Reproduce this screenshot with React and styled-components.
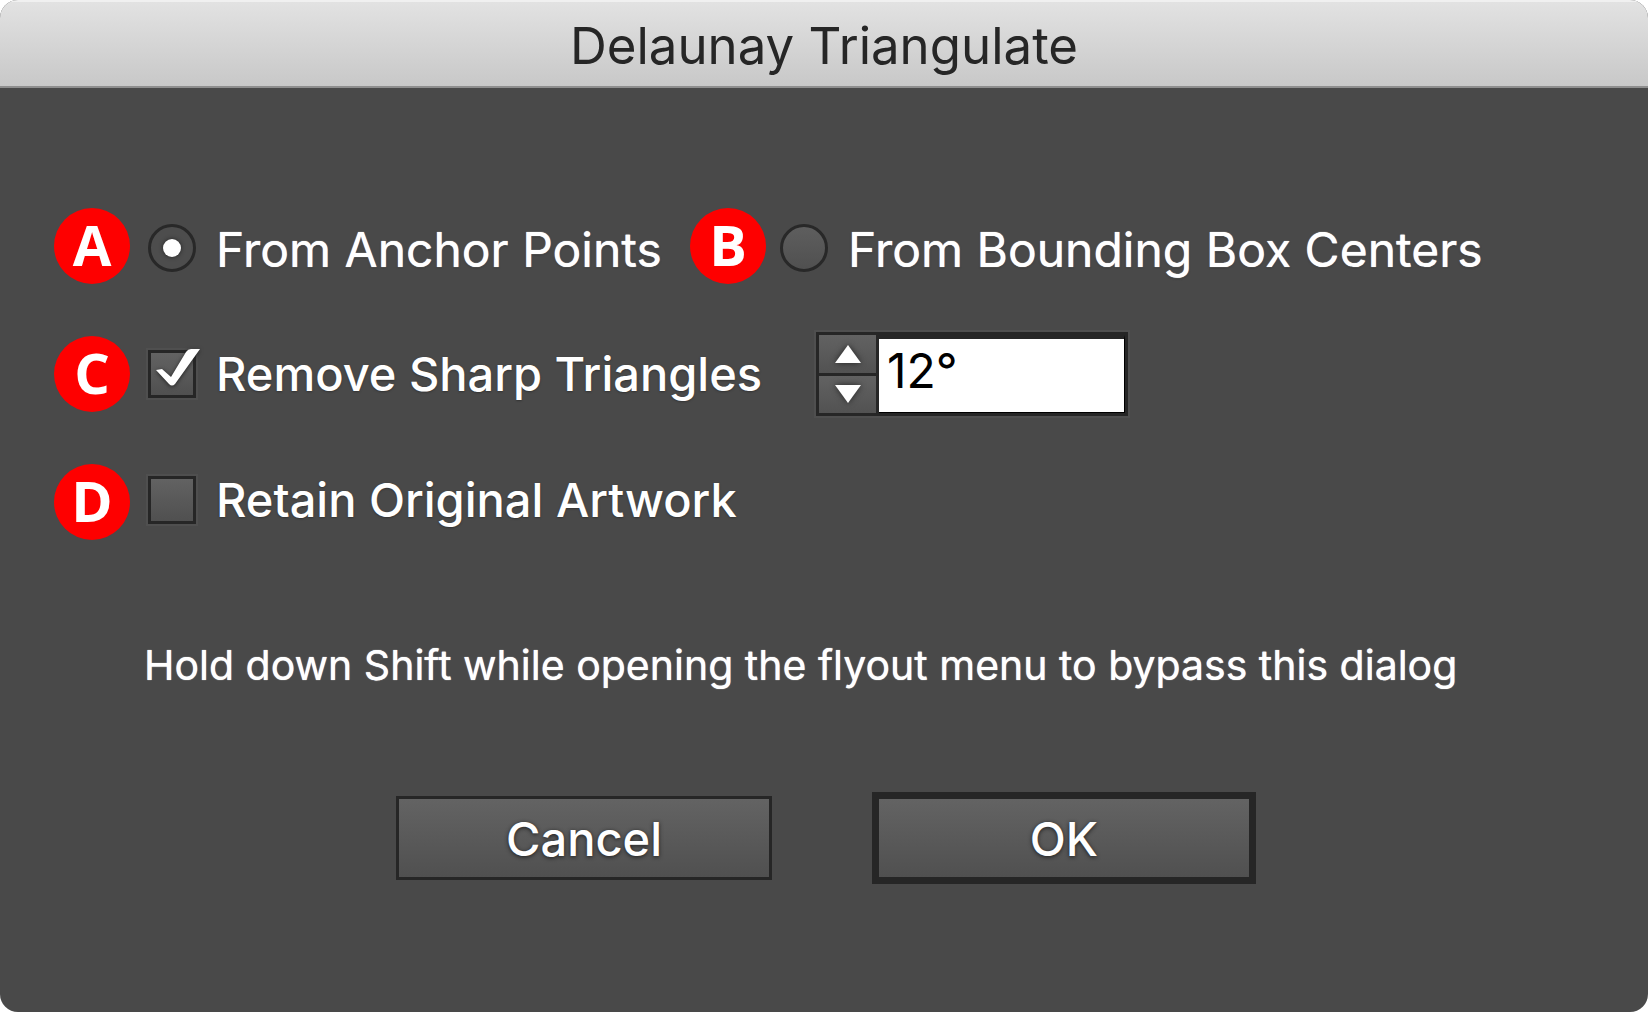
import React, { useState } from "react";
import styled, { createGlobalStyle } from "styled-components";

const GlobalStyle = createGlobalStyle`
  * {
    box-sizing: border-box;
  }

  body {
    margin: 0;
    background-color: #fff;
    font-family: Inter, "Liberation Sans", sans-serif;
  }
`;

const Dialog = styled.form`
  display: flex;
  flex-direction: column;
  min-height: 100vh;
  border-radius: 18px;
  overflow: hidden;
  background-color: #494949;
  color: #fff;
`;

const TitleBar = styled.header`
  display: flex;
  align-items: center;
  justify-content: center;
  height: 88px;
  padding-top: 4px;
  background: linear-gradient(#e2e2e2, #c8c8c8);
  border-top: 2px solid #f0f0f0;
  border-bottom: 2px solid #8e8e8e;
`;

const Title = styled.h1`
  margin: 0;
  font-size: 51px;
  font-weight: 400;
  line-height: 60px;
  color: #262626;
`;

const Options = styled.div`
  display: flex;
  gap: 18px;
  padding: 120px 54px 0;
`;

const Markers = styled.div`
  display: flex;
  flex-direction: column;
  gap: 52px;
`;

const Marker = styled.span`
  display: flex;
  flex-shrink: 0;
  align-items: center;
  justify-content: center;
  width: 76px;
  height: 76px;
  padding-bottom: 4px;
  border-radius: 50%;
  background-color: #fe0000;
  font-family: "Open Sans", sans-serif;
  font-size: 56px;
  font-weight: 700;
  line-height: 76px;
`;

const Rows = styled.div`
  display: flex;
  flex: 1;
  flex-direction: column;
  gap: 50px;
`;

const Row = styled.div`
  display: grid;
  grid-template-columns: ${(props) => props.$first || "auto"} 1fr;
  grid-template-rows: 76px;
  align-items: center;
`;

const MarkedOption = styled.div`
  display: flex;
  gap: 14px;
`;

const Option = styled.label`
  display: flex;
  align-items: center;
  gap: 20px;
  padding-top: ${(props) => (props.$check ? 4 : 8)}px;
  font-size: ${(props) => (props.$check ? 47 : 48)}px;
  font-weight: ${(props) => (props.$check ? 500 : 400)};
  line-height: 60px;
  white-space: nowrap;
  text-shadow: ${(props) => (props.$check ? "0 1px 2px #333" : "0 0 1px #fff, 0 1px 2px #333")};
`;

const Radio = styled.input`
  appearance: none;
  display: grid;
  place-items: center;
  flex-shrink: 0;
  width: 48px;
  height: 48px;
  margin: 0 0 4px;
  border: 3px solid #282828;
  border-radius: 50%;
  background: linear-gradient(#5e5e5e, #505050);

  &:checked {
    background: #4d4d4d;
  }

  &:checked::before {
    content: "";
    width: 18px;
    height: 18px;
    border-radius: 50%;
    background-color: #fff;
    box-shadow: 0 0 4px #222;
  }
`;

const CheckWrap = styled.span`
  position: relative;
  flex-shrink: 0;
  width: 48px;
  height: 48px;
`;

const Checkbox = styled.input`
  appearance: none;
  display: block;
  width: 48px;
  height: 48px;
  margin: 0;
  border: 3px solid #262626;
  background: linear-gradient(#626262, #505050);
  box-shadow: 0 0 0 2px #4f4f4f;
`;

const CheckMark = styled.svg`
  position: absolute;
  inset: 0;
  overflow: visible;
  pointer-events: none;
  filter: drop-shadow(0 1px 2px #222);
`;

const Spinner = styled.div`
  display: flex;
  width: 312px;
  height: 84px;
  margin-top: 4px;
  border: 3px solid #262626;
  box-shadow: 0 0 0 2px #4f4f4f;
`;

const Arrows = styled.div`
  display: flex;
  flex-direction: column;
  gap: 3px;
  width: 60px;
  border-right: 3px solid #262626;
  background-color: #262626;
`;

const ArrowButton = styled.button`
  display: flex;
  flex: 1;
  align-items: center;
  justify-content: center;
  padding: 0;
  border: none;
  background: linear-gradient(#626262, #525252);

  svg {
    filter: drop-shadow(0 0 3px #222);
  }
`;

const AngleInput = styled.input`
  flex: 1;
  min-width: 0;
  padding: 0 8px 10px;
  border: 1px solid #000;
  border-left: none;
  border-top: 4px solid #262626;
  border-radius: 0;
  outline: none;
  background-color: #fff;
  color: #000;
  font-family: inherit;
  font-size: 48px;
`;

const Hint = styled.p`
  margin: 100px 54px 0 144px;
  font-size: 41px;
  line-height: 50px;
  text-shadow: 0 0 1px #fff;
`;

const Actions = styled.div`
  display: flex;
  align-items: center;
  justify-content: center;
  gap: 100px;
  padding: 102px 0 128px 4px;
`;

const Button = styled.button`
  height: ${(props) => (props.$primary ? 92 : 84)}px;
  width: ${(props) => (props.$primary ? 384 : 376)}px;
  padding: 0;
  border: ${(props) => (props.$primary ? 7 : 3)}px solid #262626;
  background: linear-gradient(#636363, #505050);
  color: #fff;
  font-family: inherit;
  font-size: 47px;
  font-weight: 500;
  text-shadow: 0 1px 4px #1c1c1c;
`;

const App = () => {
  const [source, setSource] = useState("anchors");
  const [removeSharp, setRemoveSharp] = useState(true);
  const [retain, setRetain] = useState(false);
  const [angle, setAngle] = useState(12);

  const handleAngle = (e) => setAngle(parseInt(e.target.value, 10) || 0);

  const renderCheck = (checked, setChecked) => (
    <CheckWrap>
      <Checkbox type="checkbox" checked={checked} onChange={() => setChecked(!checked)} />
      {checked && (
        <CheckMark width="48" height="48" viewBox="0 0 48 48">
          <path d="M8 20 L14 19 L23 27 L38 2 Q40 -1 43 -1 L52 -1 L27 34 Q24 37 21 34 Z" fill="#fff" />
        </CheckMark>
      )}
    </CheckWrap>
  );

  return (
    <>
      <GlobalStyle />
      <Dialog onSubmit={(e) => e.preventDefault()}>
        <TitleBar>
          <Title>Delaunay Triangulate</Title>
        </TitleBar>

        <Options>
          <Markers>
            <Marker>A</Marker>
            <Marker>C</Marker>
            <Marker>D</Marker>
          </Markers>
          <Rows>
            <Row $first="542px">
              <Option>
                <Radio
                  type="radio"
                  name="source"
                  checked={source === "anchors"}
                  onChange={() => setSource("anchors")}
                />
                From Anchor Points
              </Option>
              <MarkedOption>
                <Marker>B</Marker>
                <Option>
                  <Radio
                    type="radio"
                    name="source"
                    checked={source === "centers"}
                    onChange={() => setSource("centers")}
                  />
                  From Bounding Box Centers
                </Option>
              </MarkedOption>
            </Row>
            <Row $first="668px">
              <Option $check>
                {renderCheck(removeSharp, setRemoveSharp)}
                Remove Sharp Triangles
              </Option>
              <Spinner>
                <Arrows>
                  <ArrowButton type="button" aria-label="Increase" onClick={() => setAngle(angle + 1)}>
                    <svg width="26" height="20" viewBox="0 0 26 20">
                      <path d="M13 1 L26 19 H0 Z" fill="#fff" />
                    </svg>
                  </ArrowButton>
                  <ArrowButton type="button" aria-label="Decrease" onClick={() => setAngle(angle - 1)}>
                    <svg width="26" height="20" viewBox="0 0 26 20">
                      <path d="M0 1 H26 L13 19 Z" fill="#fff" />
                    </svg>
                  </ArrowButton>
                </Arrows>
                <AngleInput type="text" aria-label="Angle" value={angle + "°"} onChange={handleAngle} />
              </Spinner>
            </Row>
            <Row>
              <Option $check>
                {renderCheck(retain, setRetain)}
                Retain Original Artwork
              </Option>
            </Row>
          </Rows>
        </Options>

        <Hint>Hold down Shift while opening the flyout menu to bypass this dialog</Hint>

        <Actions>
          <Button type="button">Cancel</Button>
          <Button type="submit" $primary>OK</Button>
        </Actions>
      </Dialog>
    </>
  );
};

export default App;
